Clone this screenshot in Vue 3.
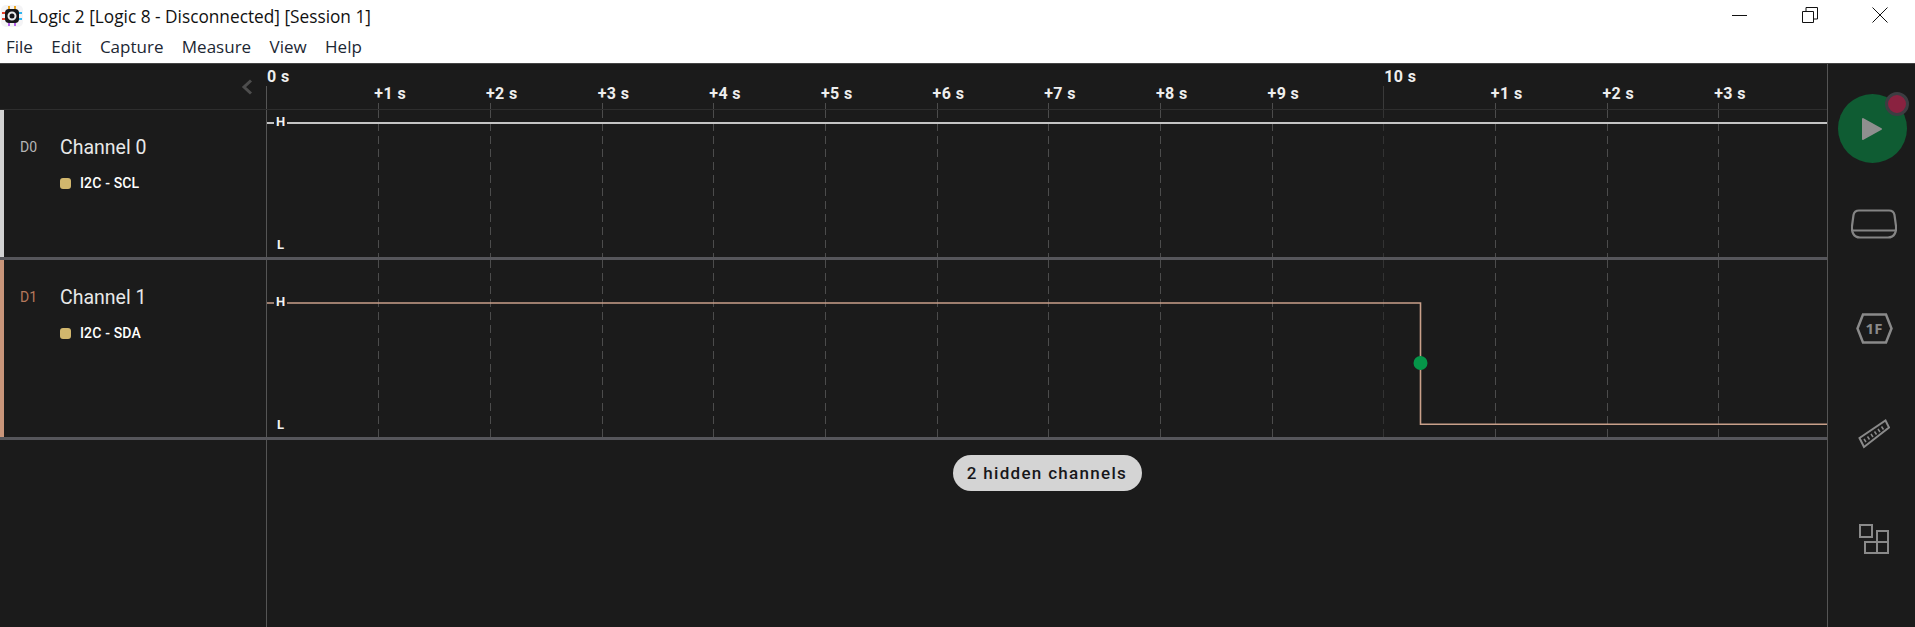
<script setup>
const step = 111.65
const labels = ['0 s', '+1 s', '+2 s', '+3 s', '+4 s', '+5 s', '+6 s', '+7 s', '+8 s', '+9 s', '10 s', '+1 s', '+2 s', '+3 s']
const ticks = labels.map((text, i) => ({
  text,
  x: i ? i * step + 0.7 : 0,
  major: i === 0 || i === 10
}))
const channels = [
  { id: 'D0', name: 'Channel 0', analyzer: 'I2C - SCL', cls: 'ch0', height: 150, hY: 11, lY: 134, path: 'M0 13H1560' },
  { id: 'D1', name: 'Channel 1', analyzer: 'I2C - SDA', cls: 'ch1', height: 180, hY: 41, lY: 164, path: 'M0 43H1153.500V164.300H1560', dot: { x: 1153.5, y: 103 } }
]
const menus = ['File', 'Edit', 'Capture', 'Measure', 'View', 'Help']
</script>

<template>
  <div class="app">
    <header class="titlebar">
      <svg class="logo" viewBox="0 0 22 22" width="22" height="22">
        <rect x="0" y="0" width="22" height="22" rx="5" fill="#f4f4f6" />
        <path d="M8 1v4M14 1v4" stroke="#eda825" stroke-width="2" />
        <path d="M1 8h4M1 14h4" stroke="#e5402a" stroke-width="2" />
        <path d="M17 8h4M17 14h4" stroke="#2fb5f0" stroke-width="2" />
        <path d="M8 17v4M14 17v4" stroke="#b562ea" stroke-width="2" />
        <rect x="4" y="4" width="14" height="14" rx="4" fill="#17171a" />
        <circle cx="11" cy="11" r="3.500" fill="#17171a" stroke="#ececec" stroke-width="2" />
      </svg>
      <span class="title">Logic 2 [Logic 8 - Disconnected] [Session 1]</span>
      <div class="winbtns">
        <svg width="16" height="16" viewBox="0 0 16 16"><path d="M0 8.500H15" stroke="#111" fill="none" /></svg>
        <svg width="16" height="16" viewBox="0 0 16 16"><path d="M.5 4.500H11.500V15.500H.5ZM4 4.500V.5H15.500V12H11.500" stroke="#111" fill="none" /></svg>
        <svg width="16" height="16" viewBox="0 0 16 16"><path d="M.5 .5L15.500 15.500M15.500 .5L.5 15.500" stroke="#111" fill="none" /></svg>
      </div>
    </header>
    <nav class="menubar">
      <span v-for="m in menus" :key="m">{{ m }}</span>
    </nav>
    <main class="main">
      <section class="content">
        <div class="timehead">
          <div class="headside">
            <svg width="12" height="16" viewBox="0 0 12 16"><path d="M10 1.500L3 8L10 14.500" stroke="#4d4d4d" stroke-width="3" fill="none" /></svg>
          </div>
          <div class="headplot">
            <template v-for="t in ticks" :key="t.x">
              <span class="tlabel" :class="{ major: t.major }" :style="{ left: t.x + 'px' }">{{ t.text }}</span>
              <i class="htick" :class="{ major: t.major }" :style="{ left: t.x + 'px' }"></i>
            </template>
          </div>
        </div>
        <div v-for="c in channels" :key="c.id" class="row" :class="c.cls" :style="{ height: c.height + 'px' }">
          <div class="side">
            <div class="chead">
              <span class="cid">{{ c.id }}</span>
              <span class="cname">{{ c.name }}</span>
            </div>
            <div class="analyzer"><i class="swatch"></i>{{ c.analyzer }}</div>
          </div>
          <div class="plot">
            <i v-for="t in ticks.slice(1)" :key="t.x" class="tick" :class="{ major: t.major }" :style="{ left: t.x + 'px' }"></i>
            <svg class="wave" width="1560" :height="c.height" :viewBox="`0 0 1560 ${c.height}`">
              <path :d="c.path" fill="none" />
              <circle v-if="c.dot" :cx="c.dot.x" :cy="c.dot.y" r="7" fill="#059649" />
            </svg>
            <span class="lvl" :style="{ top: c.hY - 6 + 'px' }">H</span>
            <span class="lvl" :style="{ top: c.lY - 6 + 'px' }">L</span>
          </div>
        </div>
        <div class="rest">
          <div class="restplot">
            <button class="pill">2 hidden channels</button>
          </div>
        </div>
      </section>
      <aside class="rail">
        <div class="play">
          <svg width="22" height="24" viewBox="0 0 22 24"><path d="M2 2L20 12L2 22Z" fill="#8f8f8f" stroke="#8f8f8f" stroke-width="2" stroke-linejoin="round" /></svg>
          <i class="rec"></i>
        </div>
        <div class="tool">
          <svg width="46" height="30" viewBox="0 0 46 30" fill="none" stroke="#848484" stroke-width="2.200">
            <path d="M8 1.500H38C41.500 1.500 43 3.500 43.500 6L45 17C45.500 22 44 28.500 37 28.500H9C2 28.500 .5 22 1 17L2.500 6C3 3.500 4.500 1.500 8 1.500Z" />
            <path d="M2 21.500H44" />
          </svg>
        </div>
        <div class="tool">
          <div class="hex">
            <svg width="37" height="31" viewBox="0 0 37 31" fill="none"><path d="M7 1.500H30L35.500 15.500L30 29.500H7L1.500 15.500Z" stroke="#8a8a8a" stroke-width="2.500" /></svg>
            <span>1F</span>
          </div>
        </div>
        <div class="tool">
          <svg width="32" height="30" viewBox="0 0 32 30" fill="none" stroke="#8a8a8a">
            <path d="M1.500 19L27.500 1.500L31 8.500L6 28Z" stroke-width="2" />
            <path d="M6 20L8 23M9.500 17.500L11.500 20.500M13 15L15 18M16.500 12.500L18.500 15.500M20 10L22 13M23.500 7.500L25.500 10.500" stroke-width="1.500" />
          </svg>
        </div>
        <div class="tool">
          <svg width="30" height="30" viewBox="0 0 30 30" fill="none" stroke="#8a8a8a" stroke-width="2">
            <path d="M1 1H13V13H1ZM6 29V18H18V7H29V29ZM6 18H29M18 18V29" />
          </svg>
        </div>
      </aside>
    </main>
  </div>
</template>

<style scoped>
.app {
  width: 1915px;
  height: 627px;
  display: flex;
  flex-direction: column;
  overflow: hidden;
  background: #fff;
  font-family: Roboto, sans-serif;
}
.titlebar {
  height: 32px;
  flex: none;
  display: flex;
  align-items: center;
  background: #fff;
  color: #111;
}
.logo { margin-left: 1px; margin-right: 6px; flex: none; }
.title { font: 17.250px "Open Sans", sans-serif; white-space: nowrap; }
.winbtns {
  margin-left: auto;
  margin-top: -2px;
  display: flex;
  gap: 54px;
  padding-right: 27px;
}
.menubar {
  height: 32px;
  flex: none;
  box-sizing: border-box;
  display: flex;
  align-items: center;
  gap: 18.400px;
  padding: 0 6px 2px;
  font: 17px "Open Sans", sans-serif;
  color: #1c2733;
  border-bottom: 1px solid #444;
}
.main {
  flex: 1;
  min-height: 0;
  display: flex;
  background: #1b1b1b;
  color: #fff;
}
.content {
  flex: 1;
  min-width: 0;
  display: flex;
  flex-direction: column;
}
.timehead {
  height: 46px;
  flex: none;
  box-sizing: border-box;
  display: flex;
  border-bottom: 1px solid #2e2e2e;
}
.headside {
  width: 266px;
  flex: none;
  display: flex;
  justify-content: flex-end;
  padding: 15px 13px 0 0;
  box-sizing: border-box;
}
.headplot { flex: 1; position: relative; }
.tlabel {
  position: absolute;
  top: 22px;
  margin-left: -4px;
  font-size: 16px;
  font-weight: 700;
  letter-spacing: .4px;
  color: #eee;
  line-height: 16px;
  white-space: nowrap;
}
.tlabel.major { top: 5px; margin-left: 1px; }
.htick {
  position: absolute;
  top: 39px;
  bottom: 0;
  width: 1px;
  background: repeating-linear-gradient(#4c4c4c 0 8px, transparent 8px 13px);
}
.htick.major { top: 22px; background: #3a3a3a; }
.htick.major:nth-child(2) { background: #555; }
.row {
  display: flex;
  flex: none;
  box-sizing: border-box;
  border-bottom: 3px solid #56565b;
}
.side {
  width: 267px;
  flex: none;
  box-sizing: border-box;
  border-right: 1px solid #555;
  padding: 25px 0 0 16px;
}
.ch0 .side { border-left: 4px solid #d2d2d2; }
.ch1 .side { border-left: 4px solid #c9957a; }
.chead { display: flex; align-items: center; height: 24px; }
.cid { width: 40px; font-size: 14px; color: #b5b5b5; }
.ch1 .cid { color: #b5785c; }
.cname { font-size: 19.500px; color: #e8e8e8; }
.analyzer {
  display: flex;
  align-items: center;
  margin: 16px 0 0 40px;
  font-size: 14px;
  font-weight: 500;
  letter-spacing: .15px;
  color: #fff;
}
.swatch {
  width: 11px;
  height: 11px;
  border-radius: 3px;
  background: #d2b76d;
  margin-right: 9px;
}
.plot { flex: 1; position: relative; overflow: hidden; }
.tick {
  position: absolute;
  top: 0;
  bottom: 0;
  margin-left: -1px;
  width: 1px;
  background: repeating-linear-gradient(#4c4c4c 0 8px, transparent 8px 13px);
}
.tick.major { background: repeating-linear-gradient(#333 0 8px, transparent 8px 13px); }
.wave { position: absolute; left: 0; top: 0; }
.ch0 .wave path { stroke: #c4c4c4; stroke-width: 2; }
.ch1 .wave path { stroke: #c9a08a; stroke-width: 1.600; }
.lvl {
  position: absolute;
  left: 7px;
  width: 13px;
  height: 13px;
  line-height: 13px;
  text-align: center;
  font-size: 13px;
  font-weight: 700;
  color: #f2f2f2;
  background: #1b1b1b;
}
.rest { flex: 1; display: flex; padding-left: 266px; }
.restplot {
  flex: 1;
  border-left: 1px solid #555;
  display: flex;
  justify-content: center;
  align-items: flex-start;
  padding-top: 15px;
}
.pill {
  height: 36px;
  width: 189px;
  padding: 0;
  border: 0;
  border-radius: 18px;
  background: #d4d4d4;
  color: #17171a;
  font: 500 17px Roboto, sans-serif;
  letter-spacing: 1.300px;
  white-space: nowrap;
}
.rail {
  width: 88px;
  flex: none;
  box-sizing: border-box;
  border-left: 1px solid #555;
  display: flex;
  flex-direction: column;
  align-items: center;
}
.play {
  position: relative;
  width: 69px;
  height: 69px;
  flex: none;
  margin-top: 30px;
  margin-bottom: 8px;
  margin-left: 1px;
  border-radius: 50%;
  background: #0f5c33;
  display: flex;
  align-items: center;
  justify-content: center;
}
.rec {
  position: absolute;
  right: -2px;
  top: -2px;
  width: 18px;
  height: 18px;
  border-radius: 50%;
  background: #8a2240;
  border: 3px solid #3d3d42;
}
.tool {
  height: 105px;
  flex: none;
  display: flex;
  align-items: center;
  justify-content: center;
  padding-left: 5px;
}
.hex { position: relative; width: 37px; height: 31px; }
.hex svg { position: absolute; left: 0; top: 0; }
.hex span {
  position: absolute;
  inset: 0;
  text-align: center;
  font: 700 15px/31px "Open Sans", sans-serif;
  color: #8a8a8a;
}
</style>
